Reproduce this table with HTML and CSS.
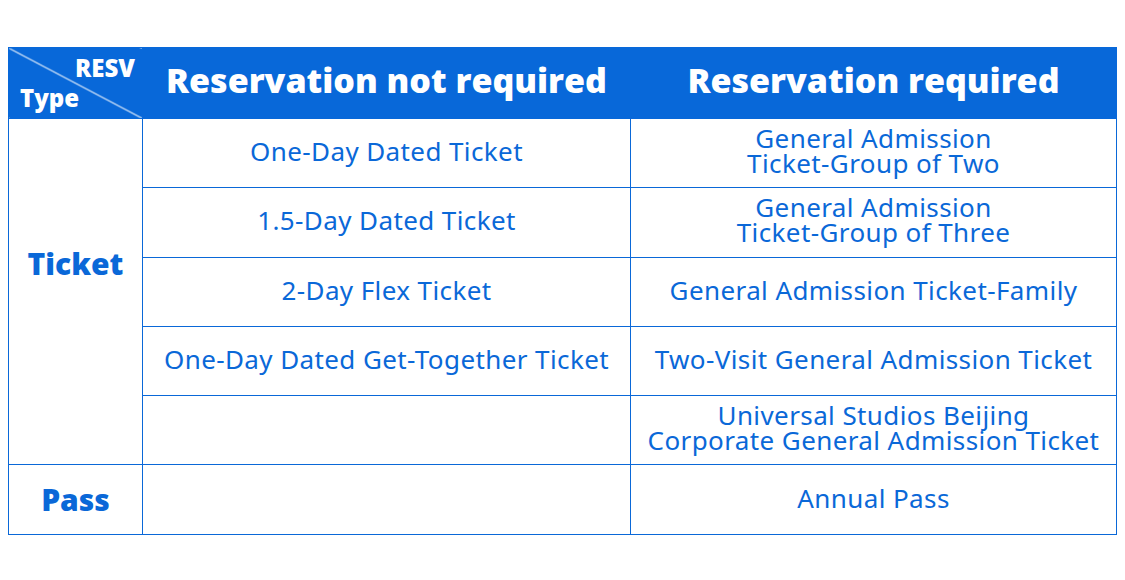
FILE: index.html
```html
<!DOCTYPE html>
<html>
<head>
<meta charset="utf-8">
<link rel="stylesheet" href="styles.css">
</head>
<body>
<div class="page">
<table class="tickets">
  <colgroup>
    <col class="c1"><col class="c2"><col class="c3">
  </colgroup>
  <thead>
    <tr>
      <th class="corner"><span class="resv">RESV</span><span class="type">Type</span></th>
      <th class="head">Reservation not required</th>
      <th class="head">Reservation required</th>
    </tr>
  </thead>
  <tbody>
    <tr>
      <td class="cat ticket" rowspan="5">Ticket</td>
      <td>One-Day Dated Ticket</td>
      <td class="two">General Admission<br>Ticket-Group of Two</td>
    </tr>
    <tr>
      <td>1.5-Day Dated Ticket</td>
      <td class="two">General Admission<br>Ticket-Group of Three</td>
    </tr>
    <tr>
      <td>2-Day Flex Ticket</td>
      <td>General Admission Ticket-Family</td>
    </tr>
    <tr>
      <td>One-Day Dated Get-Together Ticket</td>
      <td>Two-Visit General Admission Ticket</td>
    </tr>
    <tr>
      <td></td>
      <td class="two">Universal Studios Beijing<br>Corporate General Admission Ticket</td>
    </tr>
    <tr>
      <td class="cat">Pass</td>
      <td></td>
      <td>Annual Pass</td>
    </tr>
  </tbody>
</table>
</div>
</body>
</html>
```
FILE: styles.css
```css
html, body {
  margin: 0;
  padding: 0;
  background: #ffffff;
}
.page {
  padding: 47px 8px 0 8px;
}
.tickets {
  border-collapse: collapse;
  width: 1108px;
  table-layout: fixed;
  font-family: "Noto Sans", "Open Sans", sans-serif;
  color: #0a68d8;
}
.c1 { width: 134px; }
.c2 { width: 488px; }
.c3 { width: 486px; }
.tickets th, .tickets td {
  border: 1px solid #0a68d8;
  text-align: center;
  vertical-align: middle;
  padding: 0;
}
.tickets thead tr { height: 71px; }
.tickets tbody tr { height: 69.3px; }
.tickets th {
  background: #0868d9;
  color: #ffffff;
  border-color: #0868d9;
  border-left-color: #ffffff;
}
.tickets th:first-child { border-left-color: #0868d9; }
.tickets th.head {
  font-family: "Open Sans", sans-serif;
  font-weight: 800;
  font-size: 34px;
  letter-spacing: 0;
  padding-bottom: 6px;
}
.tickets th.corner {
  position: relative;
  background: linear-gradient(to top right, transparent calc(50% - 1px), #ffffff 50%, transparent calc(50% + 1px)), #0868d9;
  font-family: "Open Sans", sans-serif;
  font-weight: 800;
  font-size: 24px;
}
.corner .resv {
  position: absolute;
  right: 7px;
  top: 8px;
  line-height: 1;
}
.corner .type {
  position: absolute;
  left: 11px;
  bottom: 8px;
  line-height: 1;
}
.tickets td {
  font-size: 26px;
  letter-spacing: 0.4px;
  line-height: 25px;
  padding-bottom: 3px;
}
.tickets td.two {
  padding-bottom: 4px;
}
.tickets td.cat {
  font-family: "Open Sans", sans-serif;
  font-weight: 800;
  font-size: 30px;
  letter-spacing: 0;
  padding-bottom: 0;
}
.tickets td.ticket {
  padding-bottom: 56px;
}
```
